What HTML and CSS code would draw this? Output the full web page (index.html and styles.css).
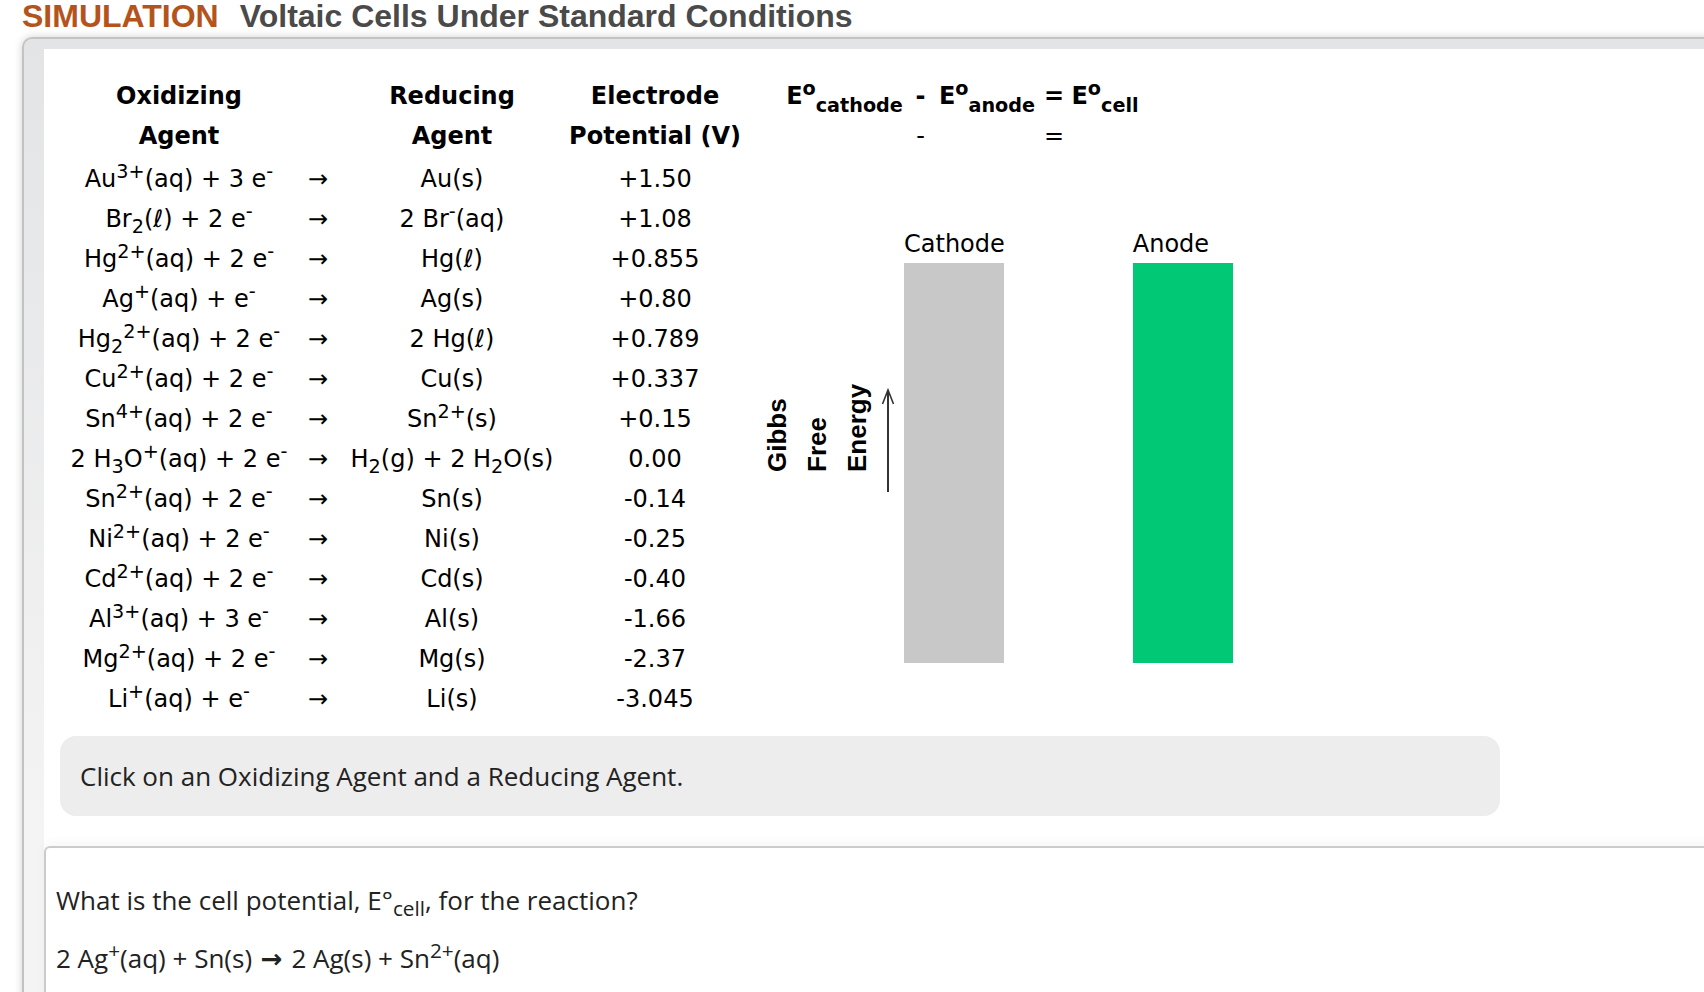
FILE: index.html
```html
<!DOCTYPE html>
<html lang="en">
<head>
<meta charset="utf-8">
<title>Voltaic Cells Under Standard Conditions</title>
<link rel="stylesheet" href="styles.css">
</head>
<body>
<h1 class="title"><span class="title-tag">SIMULATION</span>Voltaic Cells Under Standard Conditions</h1>
<div class="sim-frame">
  <div class="sim-body">
    <div class="sim-top">
      <div class="reactions">
        <div class="hdr">Oxidizing</div><div></div><div class="hdr">Reducing</div><div class="hdr">Electrode</div>
        <div class="hdr">Agent</div><div></div><div class="hdr">Agent</div><div class="hdr">Potential (V)</div>

        <div>Au<sup>3+</sup>(aq) + 3 e<sup>-</sup></div><div>→</div><div>Au(s)</div><div>+1.50</div>
        <div>Br<sub>2</sub>(ℓ) + 2 e<sup>-</sup></div><div>→</div><div>2 Br<sup>-</sup>(aq)</div><div>+1.08</div>
        <div>Hg<sup>2+</sup>(aq) + 2 e<sup>-</sup></div><div>→</div><div>Hg(ℓ)</div><div>+0.855</div>
        <div>Ag<sup>+</sup>(aq) + e<sup>-</sup></div><div>→</div><div>Ag(s)</div><div>+0.80</div>
        <div>Hg<sub>2</sub><sup>2+</sup>(aq) + 2 e<sup>-</sup></div><div>→</div><div>2 Hg(ℓ)</div><div>+0.789</div>
        <div>Cu<sup>2+</sup>(aq) + 2 e<sup>-</sup></div><div>→</div><div>Cu(s)</div><div>+0.337</div>
        <div>Sn<sup>4+</sup>(aq) + 2 e<sup>-</sup></div><div>→</div><div>Sn<sup>2+</sup>(s)</div><div>+0.15</div>
        <div>2 H<sub>3</sub>O<sup>+</sup>(aq) + 2 e<sup>-</sup></div><div>→</div><div>H<sub>2</sub>(g) + 2 H<sub>2</sub>O(s)</div><div>0.00</div>
        <div>Sn<sup>2+</sup>(aq) + 2 e<sup>-</sup></div><div>→</div><div>Sn(s)</div><div>-0.14</div>
        <div>Ni<sup>2+</sup>(aq) + 2 e<sup>-</sup></div><div>→</div><div>Ni(s)</div><div>-0.25</div>
        <div>Cd<sup>2+</sup>(aq) + 2 e<sup>-</sup></div><div>→</div><div>Cd(s)</div><div>-0.40</div>
        <div>Al<sup>3+</sup>(aq) + 3 e<sup>-</sup></div><div>→</div><div>Al(s)</div><div>-1.66</div>
        <div>Mg<sup>2+</sup>(aq) + 2 e<sup>-</sup></div><div>→</div><div>Mg(s)</div><div>-2.37</div>
        <div>Li<sup>+</sup>(aq) + e<sup>-</sup></div><div>→</div><div>Li(s)</div><div>-3.045</div>
      </div>

      <div class="energy">
        <div class="equation">
          <div>E<sup>o</sup><sub>cathode</sub></div><div>-</div><div>E<sup>o</sup><sub>anode</sub></div><div>=</div><div>E<sup>o</sup><sub>cell</sub></div>
          <div class="eq-val"></div><div class="eq-val">-</div><div class="eq-val"></div><div class="eq-val eq-equals">=</div><div class="eq-val"></div>
        </div>
        <div class="chart">
          <div class="axis">
            <div class="axis-label">Gibbs<br>Free<br>Energy</div>
            <svg class="axis-arrow" width="16" height="104" viewBox="0 0 16 104" aria-hidden="true">
              <line x1="8" y1="104" x2="8" y2="2" stroke="#333" stroke-width="2"/>
              <polyline points="2.5,16 8,2 13.5,16" fill="none" stroke="#333" stroke-width="1.6"/>
            </svg>
          </div>
          <div class="electrode">
            <div class="electrode-name">Cathode</div>
            <div class="bar bar-cathode"></div>
          </div>
          <div class="electrode">
            <div class="electrode-name">Anode</div>
            <div class="bar bar-anode"></div>
          </div>
        </div>
      </div>
    </div>

    <div class="message">Click on an Oxidizing Agent and a Reducing Agent.</div>

    <div class="question">
      <p>What is the cell potential, E°<sub>cell</sub>, for the reaction?</p>
      <p>2 Ag<sup>+</sup>(aq) + Sn(s) <span class="q-arrow">→</span> 2 Ag(s) + Sn<sup>2+</sup>(aq)</p>
    </div>
  </div>
</div>
</body>
</html>
```
FILE: styles.css
```css
html, body {
  margin: 0;
  padding: 0;
  overflow: hidden;
  background: #fff;
}

body {
  width: 1704px;
  height: 992px;
  font-family: "DejaVu Sans", Verdana, sans-serif;
  color: #000;
}

sup, sub {
  line-height: 0;
  font-size: 0.8em;
}

.title {
  margin: 0;
  padding-left: 22px;
  font: bold 32px/32px "Liberation Sans", Arial, sans-serif;
  color: #4a4a4a;
  white-space: nowrap;
}

.title-tag {
  color: #b4541c;
  margin-right: 21px;
}

.sim-frame {
  margin: 5px -200px 0 22px;
  height: 1000px;
  border-top: 2px solid #c3c3c3;
  border-left: 2px solid #c3c3c3;
  border-top-left-radius: 10px;
  padding: 10px 0 0 20px;
  background: linear-gradient(#e3e4e6, #f4f4f4 800px);
  box-shadow: 0 0 8px rgba(0, 0, 0, 0.18);
}

.sim-body {
  height: 100%;
  background: #fff;
  padding: 27px 0 0 18px;
}

.sim-top {
  display: flex;
  align-items: flex-start;
}

.reactions {
  display: grid;
  grid-template-columns: 234px 44px 224px 182px;
  grid-template-rows: 40px 43px;
  grid-auto-rows: 40px;
  font-size: 24px;
  line-height: 40px;
  text-align: center;
  white-space: nowrap;
}

.hdr {
  font-weight: bold;
}

.energy {
  margin-left: 11px;
}

.equation {
  margin-left: 21px;
  display: grid;
  grid-template-columns: 133px 19px 114px 17px 88px;
  grid-auto-rows: 40px;
  font-size: 24px;
  font-weight: bold;
  line-height: 40px;
  text-align: center;
  white-space: nowrap;
}

.equation sub {
  vertical-align: -0.4em;
}

.equation .eq-val {
  font-weight: normal;
}

.equation .eq-equals {
  padding-right: 8px;
}

.chart {
  margin-top: 74px;
  display: flex;
  align-items: flex-start;
}

.axis {
  display: flex;
  align-items: flex-start;
  margin-top: 33px;
}

.axis-label {
  writing-mode: vertical-rl;
  transform: rotate(180deg);
  height: 209px;
  font: bold 26px/40px "Liberation Sans", Arial, sans-serif;
  white-space: nowrap;
}

.axis-arrow {
  display: block;
  margin: 125px 8px 0 3px;
}

.electrode-name {
  font-size: 24px;
  line-height: 28px;
  margin-bottom: 5px;
  white-space: nowrap;
}

.electrode + .electrode {
  margin-left: 128px;
}

.bar {
  width: 100px;
  height: 400px;
}

.bar-cathode {
  background: #c8c8c8;
}

.bar-anode {
  background: #00c875;
}

.message {
  box-sizing: border-box;
  width: 1440px;
  height: 80px;
  margin: 17px 0 0 -2px;
  padding-left: 20px;
  display: flex;
  align-items: center;
  background: #ededed;
  border-radius: 16px;
  font: 26px "Open Sans", sans-serif;
  color: #222;
}

.question {
  margin: 30px 0 0 -18px;
  height: 400px;
  border-top: 2px solid #cbcbcb;
  border-left: 2px solid #cbcbcb;
  border-top-left-radius: 6px;
  padding: 33px 0 0 10px;
  box-shadow: 0 -5px 8px rgba(0, 0, 0, 0.03);
  font: 26px "Open Sans", sans-serif;
  color: #222;
}

.question p {
  margin: 0 0 20px;
  line-height: 38px;
}

.q-arrow {
  font-family: "DejaVu Sans", sans-serif;
  font-size: 26px;
  font-weight: bold;
  margin: 0 2px;
}
```
